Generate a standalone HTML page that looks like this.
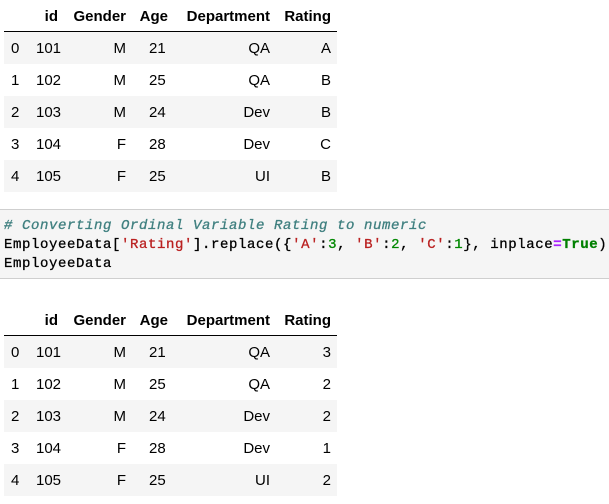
<!DOCTYPE html>
<html><head><meta charset="utf-8"><style>
body{margin:0;width:609px;height:501px;background:#fff;position:relative;overflow:hidden;font-family:"Liberation Sans",Arial,sans-serif;font-size:15px;color:#000}
.t{position:absolute;left:0;top:0;width:340px;height:200px}
.band{position:absolute;left:4px;width:333px;height:32px;background:#f5f5f5}
.line{position:absolute;left:4px;width:333px;height:1px;background:#000}
.c{position:absolute;line-height:16px;white-space:nowrap}
.r{text-align:right}
.h{font-weight:bold}
.code{position:absolute;left:0;top:209px;width:609px;height:70px;background:#f5f5f5;border-top:1px solid #cfcfcf;border-bottom:1px solid #cfcfcf;box-sizing:border-box}
.code pre{margin:0;position:absolute;left:4px;top:7px;font-family:"Liberation Mono","DejaVu Sans Mono",monospace;font-size:14px;letter-spacing:0.6px;line-height:19px;color:#000;-webkit-text-stroke:0.3px}
.cm{color:#408080;font-style:italic}
.s{color:#ba2121}
.n{color:#080}
.o{color:#aa22ff;font-weight:bold}
.k{color:#008000;font-weight:bold}
</style></head><body>

<div class="t" id="t1"></div>
<div class="t" id="t2" style="top:304px"></div>

<div class="code"><pre><span class="cm"># Converting Ordinal Variable Rating to numeric</span>
EmployeeData[<span class="s">'Rating'</span>].replace({<span class="s">'A'</span>:<span class="n">3</span>, <span class="s">'B'</span>:<span class="n">2</span>, <span class="s">'C'</span>:<span class="n">1</span>}, inplace<span class="o">=</span><span class="k">True</span>)
EmployeeData</pre></div>

<script>
function build(el, ratings){
  var h='';
  h+='<div class="line" style="top:31px"></div>';
  [0,2,4].forEach(function(i){h+='<div class="band" style="top:'+(32+i*32)+'px"></div>';});
  var hd=[['id',58],['Gender',126],['Age',168],['Department',270],['Rating',331]];
  hd.forEach(function(x){h+='<div class="c r h" style="top:9px;right:'+(340-x[1])+'px">'+x[0]+'</div>';});
  var rows=[['101','M','21','QA'],['102','M','25','QA'],['103','M','24','Dev'],['104','F','28','Dev'],['105','F','25','UI']];
  rows.forEach(function(r,i){
    var y=41+i*32;
    h+='<div class="c" style="top:'+y+'px;left:11px">'+i+'</div>';
    h+='<div class="c" style="top:'+y+'px;left:36px">'+r[0]+'</div>';
    h+='<div class="c r" style="top:'+y+'px;right:'+(340-126)+'px">'+r[1]+'</div>';
    h+='<div class="c" style="top:'+y+'px;left:149px">'+r[2]+'</div>';
    h+='<div class="c r" style="top:'+y+'px;right:'+(340-270)+'px">'+r[3]+'</div>';
    h+='<div class="c r" style="top:'+y+'px;right:'+(340-331)+'px">'+ratings[i]+'</div>';
  });
  el.innerHTML=h;
}
build(document.getElementById('t1'),['A','B','B','C','B']);
build(document.getElementById('t2'),['3','2','2','1','2']);
</script>
</body></html>
